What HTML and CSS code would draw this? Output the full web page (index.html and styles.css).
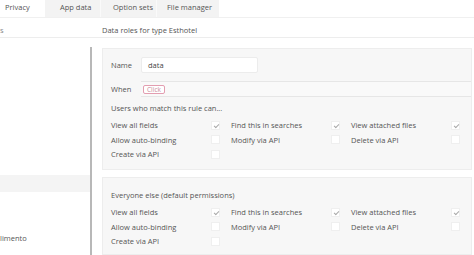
FILE: index.html
```html
<!DOCTYPE html>
<html lang="en">
<head>
    <meta charset="UTF-8">
    <title>Privacy</title>
    <link rel="stylesheet" href="styles.css">
</head>
<body>
<div class="tabs">
    <div class="tab active">Privacy</div>
    <div class="tab-group">
        <div class="tab">App data</div>
        <div class="tab">Option sets</div>
        <div class="tab">File manager</div>
    </div>
</div>

<div class="header">
    <div class="header-side">s</div>
    <div class="header-main">Data roles for type Esthotel</div>
</div>

<div class="workspace">
    <div class="sidebar">
        <div class="side-list">
            <div class="side-row selected"></div>
            <div class="side-row last">limento</div>
        </div>
        <div class="scrollbar"></div>
    </div>

    <div class="main">
        <div class="panel first">
            <div class="field-row">
                <span class="field-label">Name</span>
                <div class="name-input">data</div>
            </div>
            <div class="field-row">
                <span class="field-label">When</span>
                <div class="when-box"><span class="tag">Click</span></div>
            </div>
            <div class="panel-title">Users who match this rule can...</div>
            <div class="perms">
                <span>View all fields</span><span class="check on"></span>
                <span>Find this in searches</span><span class="check on"></span>
                <span>View attached files</span><span class="check on"></span>
                <span>Allow auto-binding</span><span class="check"></span>
                <span>Modify via API</span><span class="check"></span>
                <span>Delete via API</span><span class="check"></span>
                <span>Create via API</span><span class="check"></span>
            </div>
        </div>

        <div class="panel second">
            <div class="panel-title">Everyone else (default permissions)</div>
            <div class="perms">
                <span>View all fields</span><span class="check on"></span>
                <span>Find this in searches</span><span class="check on"></span>
                <span>View attached files</span><span class="check on"></span>
                <span>Allow auto-binding</span><span class="check"></span>
                <span>Modify via API</span><span class="check"></span>
                <span>Delete via API</span><span class="check"></span>
                <span>Create via API</span><span class="check"></span>
            </div>
        </div>
    </div>
</div>
</body>
</html>
```

FILE: styles.css
```css
body {
    margin: 0;
    width: 474px;
    height: 255px;
    overflow: hidden;
    background: #fff;
    font-family: 'Open Sans', sans-serif;
    font-size: 7.5px;
    line-height: 10px;
    color: #555;
    white-space: nowrap;
}

.tabs {
    display: flex;
    height: 17px;
    border-bottom: 1px solid #f0f0f0;
}

.tab {
    line-height: 14px;
    color: #555;
}

.tab.active {
    width: 45px;
    padding-left: 5px;
    box-sizing: border-box;
}

.tab-group {
    display: flex;
    width: 174px;
    background: #f3f3f3;
}

.tab-group .tab {
    padding-left: 15px;
    width: 56px;
    box-sizing: border-box;
    border-right: 1px solid #fafafa;
}

.tab-group .tab:nth-child(2) {
    padding-left: 12px;
}

.tab-group .tab:last-child {
    width: 62px;
    padding-left: 10px;
    border-right: none;
}

.header {
    display: flex;
    height: 19px;
    border-bottom: 1px solid #ededed;
    line-height: 24px;
}

.header-side {
    width: 102px;
    color: #888;
}

.header-main {
    flex: 1;
}

.workspace {
    display: flex;
    height: 217px;
}

.sidebar {
    display: flex;
    width: 92px;
    padding-top: 9px;
    box-sizing: border-box;
}

.side-list {
    flex: 1;
    padding-top: 128px;
}

.side-row.selected {
    height: 17px;
    background: #f4f4f4;
}

.side-row.last {
    margin-top: 41px;
}

.scrollbar {
    width: 2px;
    background: #b8b8b8;
}

.main {
    flex: 1;
    padding: 10px 2px 0 10px;
    display: flex;
    flex-direction: column;
    gap: 7px;
}

.panel {
    background: #f7f7f7;
    border: 1px solid #ededed;
    padding-left: 8px;
}

.panel.first {
    height: 122px;
    padding-top: 8px;
    box-sizing: border-box;
}

.panel.second {
    flex: 1;
    padding-top: 12px;
}

.field-row {
    display: flex;
    align-items: center;
    margin-bottom: 8px;
}

.field-label {
    width: 30px;
}

.name-input {
    width: 109px;
    height: 14px;
    line-height: 14px;
    padding-left: 6px;
    background: #fff;
    border: 1px solid #ececec;
    border-radius: 2px;
    color: #444;
}

.when-box {
    flex: 1;
    height: 14px;
    display: flex;
    align-items: center;
    padding-left: 2px;
    background: #f9f9f9;
    border-top: 1px solid #e6e6e6;
    border-bottom: 1px solid #e6e6e6;
}

.tag {
    font-size: 6.5px;
    line-height: 7px;
    padding: 0 3px;
    border: 1px solid #e39db0;
    border-radius: 2px;
    background: #fff;
    color: #c98a9a;
}

.field-row + .panel-title {
    margin-top: -2px;
}

.panel-title {
    margin-bottom: 5px;
}

.perms {
    display: grid;
    grid-template-columns: repeat(3, 100px 20px);
    grid-auto-rows: 14.5px;
    align-items: center;
}

.check {
    width: 9px;
    height: 9px;
    background: #fff;
    border: 1px solid #efefef;
    box-sizing: border-box;
    position: relative;
}

.check.on::after {
    content: '';
    position: absolute;
    left: 3px;
    top: 1px;
    width: 2px;
    height: 4px;
    border: solid #aaa;
    border-width: 0 1px 1px 0;
    transform: rotate(45deg);
}
```
